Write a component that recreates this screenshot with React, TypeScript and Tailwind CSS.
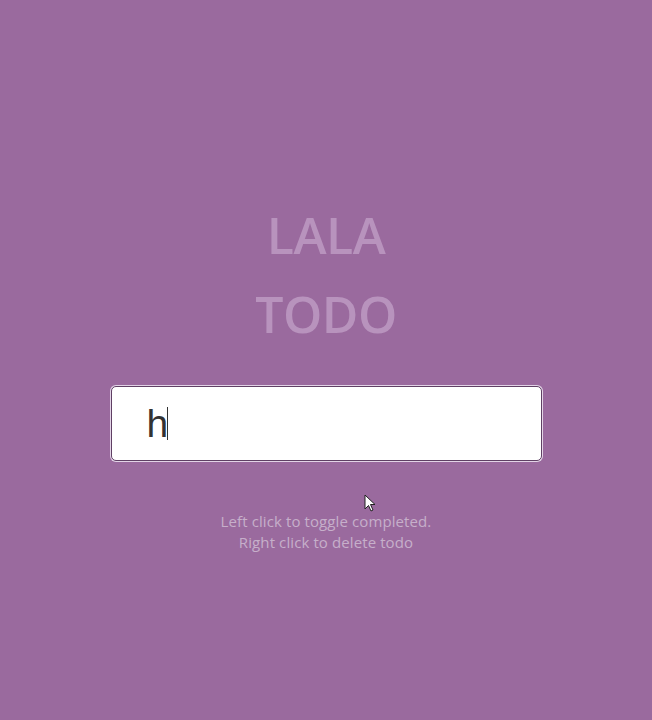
import React from "react";

export default function App() {
  return (
    <div className="relative min-h-[720px] w-full bg-[#9a6a9e] flex flex-col items-center pt-[196px]" style={{ fontFamily: "'Open Sans', sans-serif" }}>
      <h1 className="text-[50px] leading-[79px] font-semibold text-[#b893bd] text-center tracking-[-0.5px]">
        LALA
        <br />
        TODO
      </h1>
      <div className="mt-[32px] w-[431px] h-[75px] rounded-[5px] bg-white border border-[#5f4064] ring-1 ring-[#e3d4e7] flex items-center pl-[35px]">
        <span className="text-[39px] leading-none text-[#333]" style={{ fontFamily: "'Liberation Sans', Arial, sans-serif" }}>h</span>
        <span className="-ml-[1px] w-[1px] h-[33px] bg-[#333]" />
      </div>
      <p className="mt-[50px] text-[15px] leading-[21px] text-[#c6afca] text-center tracking-[0.1px]">
        Left click to toggle completed.
        <br />
        Right click to delete todo
      </p>
      <svg className="absolute left-[364px] top-[494px]" width="12" height="19" viewBox="0 0 12 19">
        <path d="M1 1 L1 15 L4.5 11.5 L7 17 L9 16 L6.5 10.5 L11 10.5 Z" fill="#fff" stroke="#222" strokeWidth="1" strokeLinejoin="round" />
      </svg>
    </div>
  );
}
